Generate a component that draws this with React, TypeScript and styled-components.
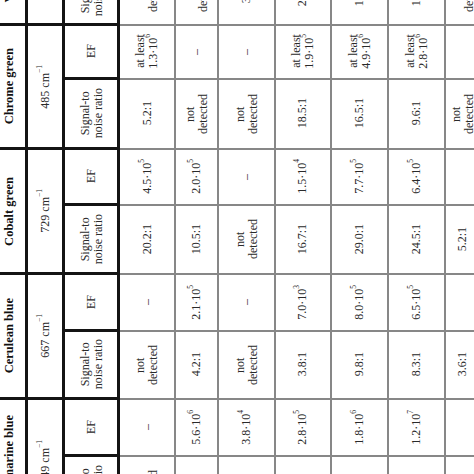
import React from "react";
import styled, { createGlobalStyle } from "styled-components";

interface Pigment {
  name: string;
  wavenumber: string;
  heights: [number, number];
  ef: string[];
  snr: string[];
}

const GlobalStyle = createGlobalStyle`
  html, body {
    margin: 0;
    padding: 0;
    background: #fff;
    overflow: hidden;
  }
`;

const Viewport = styled.div`
  width: 474px;
  height: 474px;
  overflow: hidden;
  background: #fff;
`;

const Table = styled.table`
  border-collapse: collapse;
  table-layout: fixed;
  width: 488px;
  margin: -99px 0 0 -9px;
  font-family: "Liberation Serif", "Times New Roman", serif;
  color: #232323;
`;

const Col = styled.col<{ $w: number }>`
  width: ${(p) => p.$w}px;
`;

const Row = styled.tr<{ $h: number }>`
  height: ${(p) => p.$h}px;
`;

const HeadCell = styled.td`
  border: 3px solid #141414;
  padding: 0;
  text-align: center;
  vertical-align: middle;
  font-size: 0;
  line-height: 0;
`;

const DataCell = styled.td`
  border: 2px solid #878787;
  padding: 0;
  text-align: center;
  vertical-align: middle;
  font-size: 0;
  line-height: 0;
`;

const Rot = styled.span<{ $bold?: boolean; $size?: number }>`
  display: inline-block;
  vertical-align: middle;
  writing-mode: vertical-rl;
  transform: rotate(180deg);
  text-align: center;
  white-space: nowrap;
  font-size: ${(p) => p.$size ?? 12}px;
  line-height: 12.5px;
  font-weight: ${(p) => (p.$bold ? 700 : 400)};
  color: ${(p) => (p.$bold ? "#111" : "#2a2a2a")};
`;

const Sup = styled.sup`
  font-size: 7.5px;
  line-height: 0;
  vertical-align: super;
`;

const colWidths = [34, 37, 55, 56, 43, 57, 56, 57, 57, 36];

const pigments: Pigment[] = [
  {
    name: "Viridian green",
    wavenumber: "508 cm^−1",
    heights: [56, 66],
    ef: ["–", "–", "3.1·10^4", "8.9·10^4", "4.2·10^5", "3.6·10^5", ""],
    snr: [
      "not\ndetected",
      "not\ndetected",
      "3.4:1",
      "21.3:1",
      "14.6:1",
      "12.9:1",
      "not\ndetected",
    ],
  },
  {
    name: "Chrome green",
    wavenumber: "485 cm^−1",
    heights: [54, 70],
    ef: [
      "at least\n1.3·10^6",
      "–",
      "–",
      "at least\n1.9·10^5",
      "at least\n4.9·10^6",
      "at least\n2.8·10^6",
      "",
    ],
    snr: [
      "5.2:1",
      "not\ndetected",
      "not\ndetected",
      "18.5:1",
      "16.5:1",
      "9.6:1",
      "not\ndetected",
    ],
  },
  {
    name: "Cobalt green",
    wavenumber: "729 cm^−1",
    heights: [56, 69],
    ef: ["4.5·10^5", "2.0·10^5", "–", "1.5·10^4", "7.7·10^5", "6.4·10^5", ""],
    snr: ["20.2:1", "10.5:1", "not\ndetected", "16.7:1", "29.0:1", "24.5:1", "5.2:1"],
  },
  {
    name: "Cerulean blue",
    wavenumber: "667 cm^−1",
    heights: [57, 68],
    ef: ["–", "2.1·10^5", "–", "7.0·10^3", "8.0·10^5", "6.5·10^5", ""],
    snr: ["not\ndetected", "4.2:1", "not\ndetected", "3.8:1", "9.8:1", "8.3:1", "3.6:1"],
  },
  {
    name: "Ultramarine blue",
    wavenumber: "649 cm^−1",
    heights: [57, 69],
    ef: ["–", "5.6·10^6", "3.8·10^4", "2.8·10^5", "1.8·10^6", "1.2·10^7", ""],
    snr: ["not\ndetected", "6.1:1", "4.7:1", "5.3:1", "7.2:1", "6.8:1", "2.9:1"],
  },
];

// "1.3·10^6" -> 1.3·10 with a superscript 6, "\n" breaks the line
const Value: React.FC<{ text: string; size?: number; bold?: boolean }> = ({
  text,
  size,
  bold,
}) => {
  if (!text) return null;
  const lines = text.split("\n");
  return (
    <Rot $size={size} $bold={bold}>
      {lines.map((line, i) => {
        const [base, exp] = line.split("^");
        return (
          <React.Fragment key={i}>
            {i > 0 && <br />}
            {base}
            {exp && <Sup>{exp}</Sup>}
          </React.Fragment>
        );
      })}
    </Rot>
  );
};

const App: React.FC = () => {
  return (
    <Viewport>
      <GlobalStyle />
      <Table>
        <colgroup>
          {colWidths.map((w, i) => (
            <Col key={i} $w={w} />
          ))}
        </colgroup>
        <tbody>
          {pigments.map((p) => (
            <React.Fragment key={p.name}>
              <Row $h={p.heights[0]}>
                <HeadCell rowSpan={2}>
                  <Value text={p.name} bold size={12.5} />
                </HeadCell>
                <HeadCell rowSpan={2}>
                  <Value text={p.wavenumber} />
                </HeadCell>
                <HeadCell>
                  <Value text="EF" />
                </HeadCell>
                {p.ef.map((v, i) => (
                  <DataCell key={i}>
                    <Value text={v} />
                  </DataCell>
                ))}
              </Row>
              <Row $h={p.heights[1]}>
                <HeadCell>
                  <Value text={"Signal-to\nnoise ratio"} />
                </HeadCell>
                {p.snr.map((v, i) => (
                  <DataCell key={i}>
                    <Value text={v} />
                  </DataCell>
                ))}
              </Row>
            </React.Fragment>
          ))}
        </tbody>
      </Table>
    </Viewport>
  );
};

export default App;
